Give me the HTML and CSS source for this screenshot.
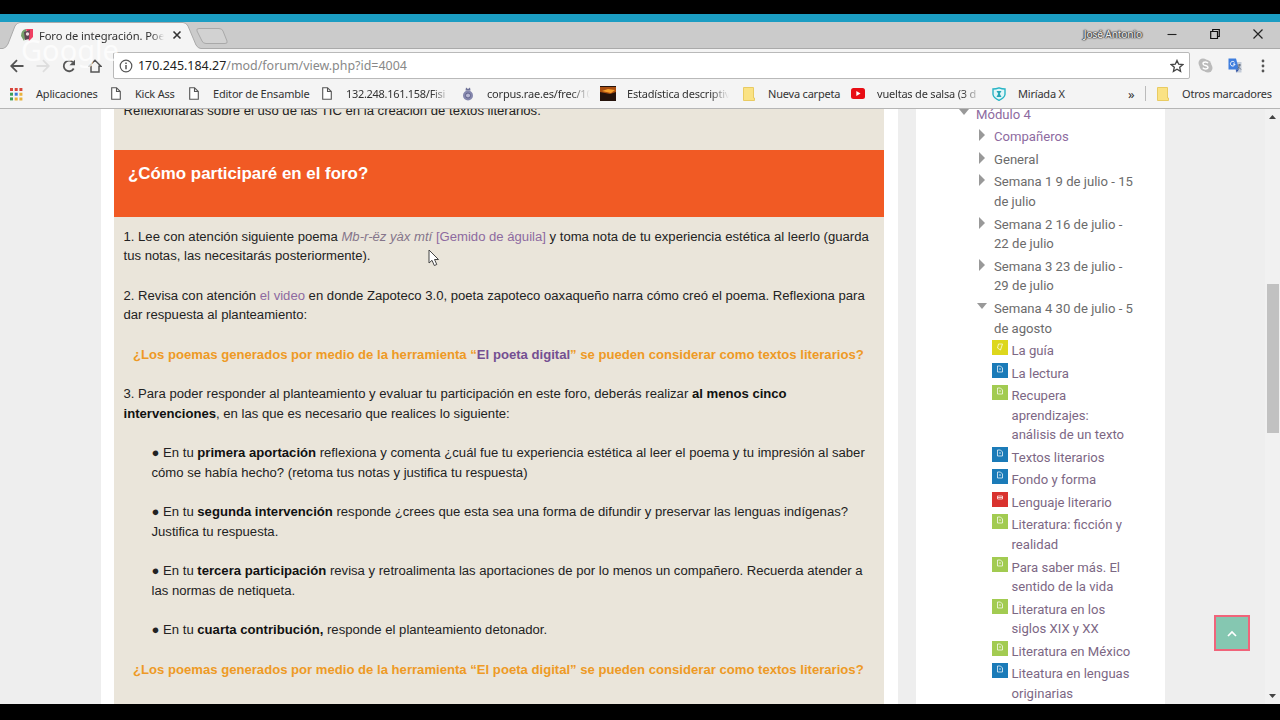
FILE: index.html
```
<!DOCTYPE html>
<html lang="es">
<head>
    <meta charset="UTF-8">
    <meta name="viewport" content="width=device-width, initial-scale=1.0">
    <title>Foro de integración. Poesía</title>
    <link rel="stylesheet" href="styles.css">
</head>
<body>
    <div class="tabs">
        <svg class="tab-shapes" width="240" height="27" viewBox="0 0 240 27">
            <path d="M0 27 L3 26 Q6 26 8 22 L15 4 Q17 0.5 20 0.5 H183 Q186 0.5 188 4 L196 23 Q198 26.5 201 26.5 V27 Z" fill="#f4f4f4"/>
            <path d="M0 26.5 H3 Q6 26 8 22 L15 4 Q17 0.5 20 0.5 H183 Q186 0.5 188 4 L196 23 Q198 26.5 201 26.5 H240" fill="none" stroke="#aaa"/>
            <path d="M199 6.5 H219 Q222 6.5 223 9 L227 19 Q228 21.5 225 21.5 H206 Q203 21.5 202 19 L197 9 Q196 6.5 199 6.5 Z" fill="#d2d2d2" stroke="#a9a9a9"/>
        </svg>
        <div class="tab">
            <svg width="12" height="14" viewBox="0 0 12 14">
                <path d="M5 1 H12 V9 L8 13 Z" fill="#ef3f62"/>
                <path d="M5 1 Q0 2 0 8 L3 13 L5 8 Z" fill="#77a16b"/>
                <path d="M3 4 L9 2 L8 11 L4 12 Z" fill="#5d4652"/>
                <circle cx="6.5" cy="6" r="1.7" fill="#f0dce0"/>
            </svg>
            <span class="tab-title">Foro de integración. Poes</span>
            <svg width="10" height="10" viewBox="0 0 10 10"><path d="M1.5 1.5 L8.5 8.5 M8.5 1.5 L1.5 8.5" stroke="#333" stroke-width="1.6"/></svg>
        </div>
        <span class="user">José Antonio</span>
        <div class="window-buttons">
            <svg width="10" height="12" viewBox="0 0 10 12"><path d="M0.5 6.5 H9.5" stroke="#222" stroke-width="1.1"/></svg>
            <svg width="10" height="12" viewBox="0 0 10 12"><path d="M0.7 3.5 H7.5 V10.5 H0.7 Z M2.7 3.5 V1.5 H9.3 V8.5 H7.5" fill="none" stroke="#111" stroke-width="1.2"/></svg>
            <svg width="10" height="12" viewBox="0 0 10 12"><path d="M0.5 1.5 L9.5 10.5 M9.5 1.5 L0.5 10.5" stroke="#222" stroke-width="1.2"/></svg>
        </div>
        <span class="watermark">Google</span>
    </div>

    <div class="toolbar">
        <div class="nav">
            <svg width="14" height="14" viewBox="0 0 14 14"><path d="M13.5 7 H1.5 M7 1.2 L1.2 7 L7 12.8" fill="none" stroke="#555" stroke-width="1.8"/></svg>
            <svg width="14" height="14" viewBox="0 0 14 14"><path d="M0.5 7 H12.5 M7 1.2 L12.8 7 L7 12.8" fill="none" stroke="#dedede" stroke-width="1.8"/></svg>
            <svg width="14" height="14" viewBox="0 0 14 14"><path d="M11.7 9.5 A5.3 5.3 0 1 1 10.8 3.2" fill="none" stroke="#555" stroke-width="1.8"/><path d="M13 0.8 V6.3 H7.5 Z" fill="#555"/></svg>
            <svg width="14" height="14" viewBox="0 0 14 14"><path d="M1 7.3 L7 1.3 L13 7.3 H11 V13 H3 V7.3 Z" fill="none" stroke="#555" stroke-width="1.5"/></svg>
        </div>
        <div class="address">
            <svg width="14" height="14" viewBox="0 0 14 14"><circle cx="7" cy="7" r="5.8" fill="none" stroke="#555" stroke-width="1.2"/><path d="M7 6 V10.3 M7 3.4 V4.9" stroke="#555" stroke-width="1.5"/></svg>
            <span class="url">170.245.184.27<span class="path">/mod/forum/view.php?id=4004</span></span>
            <svg width="14" height="14" viewBox="0 0 14 14"><path d="M7 1.4 L8.7 5.2 L12.8 5.6 L9.7 8.3 L10.6 12.4 L7 10.3 L3.4 12.4 L4.3 8.3 L1.2 5.6 L5.3 5.2 Z" fill="none" stroke="#444" stroke-width="1.3"/></svg>
        </div>
        <div class="extensions">
            <svg width="15" height="15" viewBox="0 0 15 15"><circle cx="5" cy="5" r="4.5" fill="#bbb"/><circle cx="10" cy="10" r="4.5" fill="#bbb"/><circle cx="7.5" cy="7.5" r="6" fill="#bbb"/><path d="M10 5.2 Q9.3 4 7.5 4 Q5 4 5 5.7 Q5 7 7.5 7.5 Q10 8 10 9.3 Q10 11 7.5 11 Q5.5 11 4.8 9.7" fill="none" stroke="#fff" stroke-width="1.4"/></svg>
            <svg width="15" height="15" viewBox="0 0 15 15"><path d="M6 4 H13.5 V14.5 H8 Z" fill="#c3cbd8"/><path d="M0.5 0.5 H8 L11 11.5 H0.5 Z" fill="#3f7ede"/><path d="M8 11.5 H11 L8.5 14.5 Z" fill="#2c50a4"/><path d="M6.5 4.3 A2.3 2.3 0 1 0 7 6 H5" fill="none" stroke="#fff"/><path d="M9.5 7 H13 M11.5 6 Q11.5 9 9.5 11 M10 8.5 L13 11.5" fill="none" stroke="#68717f"/></svg>
            <svg class="dots" width="4" height="14" viewBox="0 0 4 14"><circle cx="2" cy="2" r="1.4" fill="#555"/><circle cx="2" cy="7" r="1.4" fill="#555"/><circle cx="2" cy="12" r="1.4" fill="#555"/></svg>
        </div>
    </div>

    <div class="bookmarks">
        <div class="bookmark apps">
            <svg width="14" height="14" viewBox="0 0 14 14"><path d="M1 1 h3 v3 h-3z M5.7 1 h3 v3 h-3z M10.4 1 h3 v3 h-3z" fill="#d8453c"/><path d="M1 5.7 h3 v3 h-3z" fill="#3c9e58"/><path d="M5.7 5.7 h3 v3 h-3z" fill="#3c79d8"/><path d="M10.4 5.7 h3 v3 h-3z M5.7 10.4 h3 v3 h-3z M10.4 10.4 h3 v3 h-3z" fill="#e8b23a"/><path d="M1 10.4 h3 v3 h-3z" fill="#3c9e58"/></svg>
            <span>Aplicaciones</span>
        </div>
        <div class="bookmark kick">
            <svg width="10" height="13" viewBox="0 0 10 13"><path d="M0.7 0.7 H5.5 L9.3 4.5 V12.3 H0.7 Z M5.5 0.7 V4.5 H9.3" fill="#fff" stroke="#555" stroke-width="1.1"/></svg>
            <span>Kick Ass</span>
        </div>
        <div class="bookmark editor">
            <svg width="10" height="13" viewBox="0 0 10 13"><path d="M0.7 0.7 H5.5 L9.3 4.5 V12.3 H0.7 Z M5.5 0.7 V4.5 H9.3" fill="#fff" stroke="#555" stroke-width="1.1"/></svg>
            <span>Editor de Ensamble</span>
        </div>
        <div class="bookmark fisica">
            <svg width="10" height="13" viewBox="0 0 10 13"><path d="M0.7 0.7 H5.5 L9.3 4.5 V12.3 H0.7 Z M5.5 0.7 V4.5 H9.3" fill="#fff" stroke="#555" stroke-width="1.1"/></svg>
            <span class="fade">132.248.161.158/Fisi</span>
        </div>
        <div class="bookmark corpus">
            <svg width="12" height="14" viewBox="0 0 12 14"><circle cx="6" cy="8.5" r="5" fill="#8587ad"/><circle cx="6" cy="8.5" r="2.5" fill="#b8b8d3" stroke="#60628c"/><path d="M3.5 3.5 L4 0.5 L6 2 L8 0.5 L8.5 3.5 Z" fill="#6e7197"/></svg>
            <span class="fade">corpus.rae.es/frec/10</span>
        </div>
        <div class="bookmark estadistica">
            <svg width="16" height="15" viewBox="0 0 16 15"><path d="M0 0 H16 V15 H0 Z" fill="#25130c"/><path d="M0 1 H16 V6 L10 8 L0 6 Z" fill="#a94d0e"/><path d="M2 5 L8 3 L15 4 L11 7 Z" fill="#f7a12c"/></svg>
            <span class="fade">Estadística descriptiv</span>
        </div>
        <div class="bookmark carpeta">
            <svg width="12" height="14" viewBox="0 0 12 14"><path d="M0.5 0.5 H10.5 V11 H11.5 V13.5 H0.5 Z" fill="#fae284" stroke="#e9cb62"/></svg>
            <span>Nueva carpeta</span>
        </div>
        <div class="bookmark salsa">
            <svg width="14" height="11" viewBox="0 0 14 11"><rect width="14" height="11" rx="2.5" fill="#e80d14"/><path d="M5.3 3 L9.5 5.5 L5.3 8 Z" fill="#fff"/></svg>
            <span class="fade">vueltas de salsa (3 d</span>
        </div>
        <div class="bookmark miriada">
            <svg width="14" height="14" viewBox="0 0 14 14"><path d="M7 0.8 Q10 2 13 2 V7.5 Q12.5 11 7 13.3 Q1.5 11 1 7.5 V2 Q4 2 7 0.8 Z" fill="#dff6f8" stroke="#27b4c5" stroke-width="1.4"/><path d="M4.5 4 H9.5 L7.8 6.8 L9.5 10 H4.5 L6.2 6.8 Z" fill="#27a6b6"/></svg>
            <span>Miríada X</span>
        </div>
        <div class="bookmark more"><span>»</span></div>
        <div class="bookmark otros">
            <svg width="12" height="14" viewBox="0 0 12 14"><path d="M0.5 0.5 H10.5 V11 H11.5 V13.5 H0.5 Z" fill="#fae284" stroke="#e9cb62"/></svg>
            <span>Otros marcadores</span>
        </div>
    </div>

    <div class="page">
        <div class="forum">
            <div class="intro">Reflexionarás sobre el uso de las TIC en la creación de textos literarios.</div>
            <h2>¿Cómo participaré en el foro?</h2>
            <div class="instructions">
                <p>1. Lee con atención siguiente poema <a><i>Mb-r-ëz yàx mtí</i> [Gemido de águila]</a> y toma nota de tu experiencia estética al leerlo (guarda<br>tus notas, las necesitarás posteriormente).</p>
                <p>2. Revisa con atención <a>el video</a> en donde Zapoteco 3.0, poeta zapoteco oaxaqueño narra cómo creó el poema. Reflexiona para<br>dar respuesta al planteamiento:</p>
                <p class="question">¿Los poemas generados por medio de la herramienta “<a>El poeta digital</a>” se pueden considerar como textos literarios?</p>
                <p>3. Para poder responder al planteamiento y evaluar tu participación en este foro, deberás realizar <b>al menos cinco<br>intervenciones</b>, en las que es necesario que realices lo siguiente:</p>
                <p class="point">● En tu <b>primera aportación</b> reflexiona y comenta ¿cuál fue tu experiencia estética al leer el poema y tu impresión al saber<br>cómo se había hecho? (retoma tus notas y justifica tu respuesta)</p>
                <p class="point">● En tu <b>segunda intervención</b> responde ¿crees que esta sea una forma de difundir y preservar las lenguas indígenas?<br>Justifica tu respuesta.</p>
                <p class="point">● En tu <b>tercera participación</b> revisa y retroalimenta las aportaciones de por lo menos un compañero. Recuerda atender a<br>las normas de netiqueta.</p>
                <p class="point">● En tu <b>cuarta contribución,</b> responde el planteamiento detonador.</p>
                <p class="question">¿Los poemas generados por medio de la herramienta “El poeta digital” se pueden considerar como textos literarios?</p>
            </div>
        </div>

        <div class="sidebar">
            <div class="module"><a>Módulo 4</a></div>
            <ul class="sections">
                <li><a>Compañeros</a></li>
                <li>General</li>
                <li>Semana 1 9 de julio - 15<br>de julio</li>
                <li>Semana 2 16 de julio -<br>22 de julio</li>
                <li>Semana 3 23 de julio -<br>29 de julio</li>
                <li class="open">Semana 4 30 de julio - 5<br>de agosto</li>
            </ul>
            <ul class="activities">
                <li><svg class="icon yellow" viewBox="0 0 15 15"><path d="M6 4 H10 L8 10 L5 8 Z"/></svg>La guía</li>
                <li><svg class="icon blue" viewBox="0 0 15 15"><path d="M5 3 H8 L10 5 V9 H5 Z M6.5 6 H8.5"/></svg>La lectura</li>
                <li><svg class="icon green" viewBox="0 0 15 15"><path d="M5 3 H8 L10 5 V9 H5 Z M6.5 6 H8.5"/></svg>Recupera<br>aprendizajes:<br>análisis de un texto</li>
                <li><svg class="icon blue" viewBox="0 0 15 15"><path d="M5 3 H8 L10 5 V9 H5 Z M6.5 6 H8.5"/></svg>Textos literarios</li>
                <li><svg class="icon blue" viewBox="0 0 15 15"><path d="M5 3 H8 L10 5 V9 H5 Z M6.5 6 H8.5"/></svg>Fondo y forma</li>
                <li><svg class="icon red" viewBox="0 0 15 15"><path d="M5 4 H10 V7 H5 Z M5 5.5 H10"/></svg>Lenguaje literario</li>
                <li><svg class="icon green" viewBox="0 0 15 15"><path d="M5 3 H8 L10 5 V9 H5 Z M6.5 6 H8.5"/></svg>Literatura: ficción y<br>realidad</li>
                <li><svg class="icon green" viewBox="0 0 15 15"><path d="M5 3 H8 L10 5 V9 H5 Z M6.5 6 H8.5"/></svg>Para saber más. El<br>sentido de la vida</li>
                <li><svg class="icon green" viewBox="0 0 15 15"><path d="M5 3 H8 L10 5 V9 H5 Z M6.5 6 H8.5"/></svg>Literatura en los<br>siglos XIX y XX</li>
                <li><svg class="icon green" viewBox="0 0 15 15"><path d="M5 3 H8 L10 5 V9 H5 Z M6.5 6 H8.5"/></svg>Literatura en México</li>
                <li><svg class="icon blue" viewBox="0 0 15 15"><path d="M5 3 H8 L10 5 V9 H5 Z M6.5 6 H8.5"/></svg>Liteatura en lenguas<br>originarias</li>
            </ul>
        </div>

        <div class="scrollbar">
            <svg width="7" height="4" viewBox="0 0 7 4"><path d="M0 4 L3.5 0 L7 4 Z" fill="#444"/></svg>
            <div class="thumb"></div>
            <svg width="7" height="4" viewBox="0 0 7 4"><path d="M0 0 L3.5 4 L7 0 Z" fill="#444"/></svg>
        </div>

        <div class="to-top">
            <svg width="10" height="7" viewBox="0 0 10 7"><path d="M1 6 L5 2 L9 6" fill="none" stroke="#fff" stroke-width="1.7"/></svg>
        </div>
        <svg class="cursor" width="12" height="18" viewBox="0 0 12 18"><path d="M1 1 V14 L4 11.3 L6.3 16.5 L8.8 15.5 L6.5 10.5 H10.5 Z" fill="#fff" stroke="#444"/></svg>
    </div>
</body>
</html>
```
FILE: styles.css
```
* {
    box-sizing: border-box;
}
body {
    margin: 0;
    width: 1280px;
    height: 720px;
    overflow: hidden;
    border-top: 14px solid #000;
    border-bottom: 16px solid #000;
    display: flex;
    flex-direction: column;
    font-family: "Noto Sans", sans-serif;
    background: #eee;
}
svg {
    display: block;
    flex: none;
}

/* Tab strip */
.tabs {
    position: relative;
    height: 35px;
    flex: none;
    padding-bottom: 1px;
    border-top: 8px solid #1b9dc3;
    background: #cbcbcb;
    box-shadow: inset 0 -1px #aaa;
    display: flex;
    align-items: center;
}
.tab-shapes {
    position: absolute;
    top: 0;
    left: 0;
}
.tab {
    position: relative;
    width: 182px;
    padding-left: 21px;
    display: flex;
    align-items: center;
}
.tab-title {
    width: 125px;
    margin: 0 8px 0 6px;
    font-size: 11.2px;
    letter-spacing: -0.1px;
    color: #333;
    white-space: nowrap;
    overflow: hidden;
    -webkit-mask-image: linear-gradient(to right, #000 90%, transparent);
}
.user {
    margin: 0 0 2px auto;
    font-size: 10.2px;
    letter-spacing: -0.15px;
    color: #eee;
    text-shadow: 0 0 1px #333, 0 0 2px #333, 1px 0 1px #555, -1px 0 1px #555;
}
.window-buttons {
    display: flex;
    gap: 33px;
    margin: 0 17px 2px 25px;
}
.watermark {
    position: absolute;
    left: 21px;
    top: 13px;
    font-size: 29px;
    line-height: 30px;
    color: rgba(255, 255, 255, 0.75);
    z-index: 2;
}

/* Address bar */
.toolbar {
    height: 31px;
    flex: none;
    padding-top: 2px;
    background: #f4f4f4;
    display: flex;
    align-items: center;
}
.nav {
    display: flex;
    gap: 12px;
    padding-left: 10px;
    width: 113px;
}
.address {
    width: 1077px;
    height: 27px;
    padding: 0 5px;
    border: 1px solid #b9b9b9;
    border-radius: 2px;
    background: #fff;
    display: flex;
    align-items: center;
}
.url {
    flex: 1;
    margin-left: 5px;
    font-size: 12.45px;
    color: #222;
}
.path {
    color: #888;
}
.extensions {
    display: flex;
    align-items: center;
    gap: 15px;
    padding-left: 8px;
}
.dots {
    margin-left: 3px;
}

/* Bookmarks */
.bookmarks {
    height: 29px;
    flex: none;
    padding-bottom: 1px;
    background: #f4f4f4;
    border-bottom: 1px solid #b5b5b5;
    display: flex;
    align-items: center;
    font-size: 11px;
    letter-spacing: -0.2px;
    color: #333;
    white-space: nowrap;
}
.bookmark {
    flex: none;
    display: flex;
    align-items: center;
    gap: 13px;
}
.fade {
    flex: 1;
    overflow: hidden;
    -webkit-mask-image: linear-gradient(to right, #000 82%, transparent);
}
.apps {
    width: 102px;
    margin-left: 9px;
}
.kick {
    width: 78px;
    gap: 14px;
}
.editor {
    width: 133px;
    gap: 14px;
}
.fisica {
    width: 128px;
    gap: 14px;
    margin-right: 12px;
    letter-spacing: -0.3px;
}
.corpus {
    width: 128px;
    margin-right: 10px;
}
.estadistica {
    width: 129px;
    gap: 11px;
    margin-right: 14px;
}
.carpeta {
    width: 108px;
}
.salsa {
    width: 130px;
    gap: 12px;
    margin-right: 11px;
}
.miriada {
    width: 135px;
    gap: 12px;
}
.more {
    width: 19px;
    padding-left: 1px;
    height: 15px;
    font-size: 13px;
    border-right: 1px solid #bbb;
}
.otros {
    margin-left: 11px;
}

/* Page */
.page {
    position: relative;
    flex: 1;
    min-height: 0;
    overflow: hidden;
    display: flex;
    font-size: 13.12px;
    line-height: 19.69px;
}
.forum {
    width: 797px;
    margin-left: 101px;
    border: solid #fff;
    border-width: 0 14px 0 13px;
    background: #eae5da;
    font-family: "Liberation Sans", sans-serif;
    color: #222;
    white-space: nowrap;
}
.intro {
    height: 41px;
    padding-left: 9.5px;
    margin-top: -8px;
    margin-bottom: 8px;
}
h2 {
    height: 67px;
    margin: 0;
    padding: 13px 14px 0;
    background: #f15a24;
    color: #fff;
    font-size: 16.9px;
    line-height: 21px;
}
.instructions {
    padding: 9.5px 9.5px 0;
}
.instructions p {
    margin: 0 0 19.69px;
}
.instructions a,
.sidebar a {
    color: #8d6aa0;
}
.instructions i {
    color: #85758a;
}
.instructions b {
    color: #111;
}
.instructions .point {
    padding-left: 28px;
}
.instructions .question {
    padding-left: 9.5px;
    font-weight: bold;
    color: #ee9a25;
}
.instructions .question a {
    color: #744f92;
}

/* Course navigation */
.sidebar {
    width: 249px;
    margin-left: 18px;
    background: #fff;
    font-family: Roboto, sans-serif;
    color: #6b6b6b;
    white-space: nowrap;
}
.sidebar ul {
    list-style: none;
    margin: 0;
    padding: 0;
}
.module {
    position: relative;
    margin-top: -4px;
    padding-left: 60px;
}
.sections li,
.activities li {
    position: relative;
    margin-bottom: 2.8px;
}
.sidebar .sections {
    padding: 2.8px 0 0 78px;
}
.sidebar .activities {
    padding-left: 95.5px;
    color: #7c6784;
}
.sections li::before {
    content: "";
    position: absolute;
    left: -15px;
    top: 2px;
    border: solid transparent;
    border-width: 6px 0 6px 6px;
    border-left-color: #999;
}
.module::before,
.sections li.open::before {
    content: "";
    position: absolute;
    left: -17px;
    top: 4px;
    border: solid transparent;
    border-width: 6px 5px 0;
    border-top-color: #999;
}
.module::before {
    left: 43px;
}
.icon {
    position: absolute;
    left: -20px;
    top: -1px;
    width: 16px;
    height: 15px;
    fill: none;
    stroke: rgba(255, 255, 255, 0.8);
    stroke-width: 0.9;
}
.yellow {
    background: #ddd71c;
}
.blue {
    background: #1b7bb8;
}
.green {
    background: #a2cb51;
}
.red {
    background: #d9322e;
}

.scrollbar {
    width: 15px;
    margin-left: auto;
    padding: 6px 1px;
    background: #f1f1f1;
    display: flex;
    flex-direction: column;
    align-items: center;
    justify-content: space-between;
}
.thumb {
    width: 12px;
    height: 149px;
    margin-bottom: 96px;
    background: #c1c1c1;
}
.to-top {
    position: absolute;
    left: 1214px;
    top: 506px;
    width: 36px;
    height: 36px;
    border: 2px solid #f0647a;
    background: #85c7b1;
    display: flex;
    align-items: center;
    justify-content: center;
}
.cursor {
    position: absolute;
    left: 428px;
    top: 140px;
}
```
